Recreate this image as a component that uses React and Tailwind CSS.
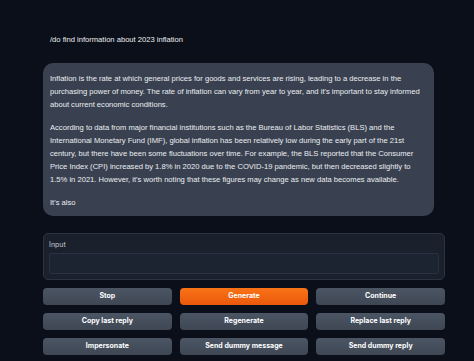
import React from 'react';

const buttons = [
    { label: 'Stop' },
    { label: 'Generate', primary: true },
    { label: 'Continue' },
    { label: 'Copy last reply' },
    { label: 'Regenerate' },
    { label: 'Replace last reply' },
    { label: 'Impersonate' },
    { label: 'Send dummy message' },
    { label: 'Send dummy reply' },
];

// lines are broken the same way as in the chat window
const para1 = [
    'Inflation is the rate at which general prices for goods and services are rising, leading to a decrease in the',
    "purchasing power of money. The rate of inflation can vary from year to year, and it's important to stay informed",
    'about current economic conditions.',
];

const para2 = [
    'According to data from major financial institutions such as the Bureau of Labor Statistics (BLS) and the',
    'International Monetary Fund (IMF), global inflation has been relatively low during the early part of the 21st',
    'century, but there have been some fluctuations over time. For example, the BLS reported that the Consumer',
    'Price Index (CPI) increased by 1.8% in 2020 due to the COVID-19 pandemic, but then decreased slightly to',
    "1.5% in 2021. However, it's worth noting that these figures may change as new data becomes available.",
];

const App = () => {
    return (
        <div className="w-[474px] h-[361px] bg-[#0b0f19] overflow-hidden text-[#eceef1] font-['Liberation_Sans',Arial,sans-serif]">
            {/* chat history */}
            <div className="pt-[33px] pl-[43px] pr-[40px]">
                <div className="pl-[7px] text-[7.6px] leading-[13px]">/do find information about 2023 inflation</div>

                <div className="mt-[17px] bg-[#394150] rounded-[10px] px-[7px] pt-[9px] pb-[7px] text-[7.6px] leading-[13px] whitespace-nowrap">
                    <p>
                        {para1.map((l) => (
                            <span key={l} className="block">{l}</span>
                        ))}
                    </p>
                    <p className="mt-[10px]">
                        {para2.map((l) => (
                            <span key={l} className="block">{l}</span>
                        ))}
                    </p>
                    <p className="mt-[10px]">It's also</p>
                </div>
            </div>

            {/* input + buttons */}
            <div className="mt-[17px] pl-[43px] pr-[29px]">
                <div className="bg-[#1a202c] border border-[#2b3340] rounded-[5px] px-[5px] pt-[6px] pb-[5px]">
                    <div className="text-[7px] leading-[10px] text-[#c7ccd4] font-['Inter',sans-serif]">Input</div>
                    <div className="mt-[3px] h-[21px] bg-[#1c2331] border border-[#2a3241] rounded-[2px]"></div>
                </div>

                <div className="mt-[8px] grid grid-cols-3 gap-x-[8px] gap-y-[8px]">
                    {buttons.map((b) => (
                        <button
                            key={b.label}
                            className={
                                b.primary
                                    ? "h-[17px] rounded-[4px] bg-gradient-to-b from-[#f97316] to-[#ea580c] text-white text-[7px] font-bold font-['Inter',sans-serif]"
                                    : "h-[17px] rounded-[4px] bg-gradient-to-b from-[#4b5563] to-[#3f4754] text-white text-[7px] font-bold font-['Inter',sans-serif]"
                            }
                        >
                            {b.label}
                        </button>
                    ))}
                </div>
            </div>
        </div>
    );
};

export default App;
